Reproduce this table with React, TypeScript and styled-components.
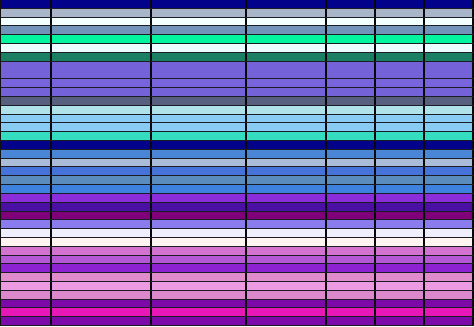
import React from "react";
import styled, { createGlobalStyle } from "styled-components";

const GlobalStyle = createGlobalStyle`
  html, body {
    margin: 0;
    padding: 0;
    background: #ffffff;
    overflow: hidden;
    font-family: "Liberation Sans", Arial, sans-serif;
  }
`;

const PITCH = 8.82;

const Table = styled.div`
  display: flex;
  flex-direction: column;
  width: 474px;
  box-sizing: border-box;
  border-left: 1px solid #111;
`;

const Row = styled.div<{ $bg: string; $span: number }>`
  display: grid;
  grid-template-columns: 51px 100px 95px 80px 49px 49px 49px;
  height: ${(p) => (PITCH * p.$span).toFixed(2)}px;
  box-sizing: border-box;
  background: ${(p) => p.$bg};
  border-bottom: 1px solid #1c1c24;
`;

const Cell = styled.div`
  box-sizing: border-box;
  border-right: 2px solid #08080c;
`;

type RowData = { color: string; span?: number };

const rows: RowData[] = [
  { color: "#02028a" },
  { color: "#a9b5c8" },
  { color: "#f2fffe" },
  { color: "#7394ba" },
  { color: "#02f59e" },
  { color: "#ecfcff" },
  { color: "#1b7f64" },
  { color: "#7462d8", span: 2 },
  { color: "#7864dc" },
  { color: "#7462d8" },
  { color: "#58607f" },
  { color: "#b0e2ea" },
  { color: "#88ccf4" },
  { color: "#88ccf4" },
  { color: "#34dcc0" },
  { color: "#02028a" },
  { color: "#4a86d6" },
  { color: "#aabcd8" },
  { color: "#4673da" },
  { color: "#5b8cbe" },
  { color: "#3c82de" },
  { color: "#8c2ddc" },
  { color: "#4a10a4" },
  { color: "#7f0078" },
  { color: "#8a7bee" },
  { color: "#eeeefc" },
  { color: "#fff4f0" },
  { color: "#d472cf" },
  { color: "#b458d6" },
  { color: "#8c22d2" },
  { color: "#e08ccc" },
  { color: "#ec9ae2" },
  { color: "#dc88cc" },
  { color: "#7d0aa8" },
  { color: "#e818b8" },
  { color: "#7c0aa8" },
];

const COLS = 7;

export default function App() {
  return (
    <>
      <GlobalStyle />
      <Table>
        {rows.map((r, i) => (
          <Row key={i} $bg={r.color} $span={r.span ?? 1}>
            {Array.from({ length: COLS }).map((_, j) => (
              <Cell key={j} />
            ))}
          </Row>
        ))}
      </Table>
    </>
  );
}
